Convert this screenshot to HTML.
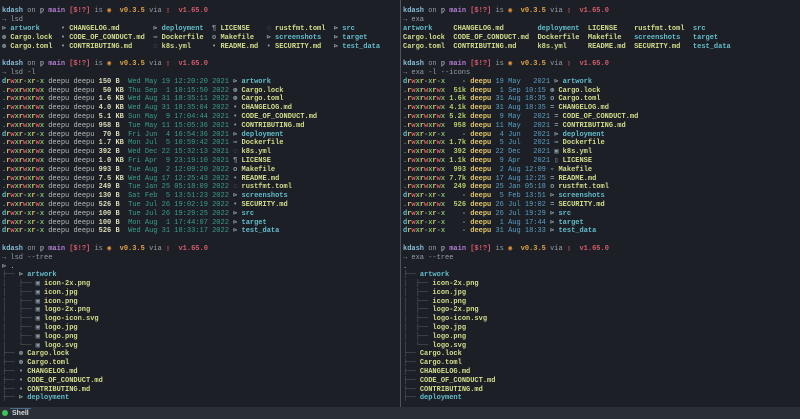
<!DOCTYPE html>
<html><head><meta charset="utf-8"><style>
html,body{margin:0;padding:0;background:#1c2026;width:800px;height:419px;overflow:hidden}
pre{position:absolute;margin:0;font-family:"Liberation Mono","DejaVu Sans Mono",monospace;font-size:7px;line-height:8.8px;font-weight:bold;color:#c8ccd0;white-space:pre}
#L{left:2px;top:7.4px}
#R{left:403px;top:7.4px}
o{display:inline-block;width:1ch;color:#8a9aa0}
w{display:inline-block;width:2ch}
k{color:#86bcd8}
g{color:#969ca4;font-weight:normal}
m{color:#b57ad2}
qq{color:#d9566c}
v{color:#e0a042}
uu{color:#d35a68}
d{color:#62bccb}
f{color:#d3dc8c}
t{color:#3a9e86;font-weight:normal}
e{color:#b8b8b8;font-weight:normal}
sz{color:#dcdcb4}
c{color:#62bccb}
y{color:#d6c26a}
r{color:#e0606c}
x{color:#7cc06c}
n{color:#8a9096}
l{color:#5a6068;font-weight:normal}
z{color:#b0cc66}
h{color:#e2c468}
bb{color:#5b9fc2;font-weight:normal}
#div{position:absolute;left:400px;top:0;width:1px;height:407px;background:#4e545c}
#bar{position:absolute;left:0;top:407px;width:800px;height:12px;background:#2a2f36}
#dot{position:absolute;left:2px;top:410px;width:6px;height:6px;border-radius:50%;background:#3fc25a}
#tab{position:absolute;left:10px;top:408px;font-family:"Liberation Sans",sans-serif;font-size:7px;font-weight:bold;color:#d8dce0;line-height:10px;border-top:1px solid #4a6a90;padding:0 2px}
</style></head><body>
<pre id="L"><k>kdash</k> <g>on</g> <m><o>ƿ</o> main</m> <qq>[$!?]</qq> <g>is</g> <w style="color:#e8913a">◉</w> <v>v0.3.5</v> <g>via</g> <w style="color:#c0505a">▯</w> <uu>v1.65.0</uu>
<g>→ lsd</g>
<o>⊳</o> <d>artwork</d>     <o>•</o> <f>CHANGELOG.md</f>        <o>⊳</o> <d>deployment</d>  <o>¶</o> <f>LICENSE</f>    <o>◌</o> <f>rustfmt.toml</f>  <o>⊳</o> <d>src</d>
<o>⊛</o> <f>Cargo.lock</f>  <o>•</o> <f>CODE_OF_CONDUCT.md</f>  <o>⊸</o> <f>Dockerfile</f>  <o>o</o> <f>Makefile</f>   <o>⊳</o> <d>screenshots</d>   <o>⊳</o> <d>target</d>
<o>⊛</o> <f>Cargo.toml</f>  <o>•</o> <f>CONTRIBUTING.md</f>     <o>◌</o> <f>k8s.yml</f>     <o>•</o> <f>README.md</f>  <o>•</o> <f>SECURITY.md</f>   <o>⊳</o> <d>test_data</d>

<k>kdash</k> <g>on</g> <m><o>ƿ</o> main</m> <qq>[$!?]</qq> <g>is</g> <w style="color:#e8913a">◉</w> <v>v0.3.5</v> <g>via</g> <w style="color:#c0505a">▯</w> <uu>v1.65.0</uu>
<g>→ lsd -l</g>
<c>d</c><y>r</y><r>w</r><x>x</x><y>r</y><n>-</n><x>x</x><y>r</y><n>-</n><x>x</x> <e>deepu deepu</e> <sz>150 B </sz> <t>Wed May 19 12:20:20 2021</t> <o>⊳</o> <d>artwork</d>
<n>.</n><y>r</y><r>w</r><x>x</x><y>r</y><r>w</r><x>x</x><y>r</y><r>w</r><x>x</x> <e>deepu deepu</e> <sz> 50 KB</sz> <t>Thu Sep  1 10:15:50 2022</t> <o>⊛</o> <f>Cargo.lock</f>
<n>.</n><y>r</y><r>w</r><x>x</x><y>r</y><r>w</r><x>x</x><y>r</y><r>w</r><x>x</x> <e>deepu deepu</e> <sz>1.6 KB</sz> <t>Wed Aug 31 18:35:11 2022</t> <o>⊛</o> <f>Cargo.toml</f>
<n>.</n><y>r</y><r>w</r><x>x</x><y>r</y><r>w</r><x>x</x><y>r</y><r>w</r><x>x</x> <e>deepu deepu</e> <sz>4.0 KB</sz> <t>Wed Aug 31 18:35:04 2022</t> <o>•</o> <f>CHANGELOG.md</f>
<n>.</n><y>r</y><r>w</r><x>x</x><y>r</y><r>w</r><x>x</x><y>r</y><r>w</r><x>x</x> <e>deepu deepu</e> <sz>5.1 KB</sz> <t>Sun May  9 17:04:44 2021</t> <o>•</o> <f>CODE_OF_CONDUCT.md</f>
<n>.</n><y>r</y><r>w</r><x>x</x><y>r</y><r>w</r><x>x</x><y>r</y><r>w</r><x>x</x> <e>deepu deepu</e> <sz>958 B </sz> <t>Tue May 11 15:05:36 2021</t> <o>•</o> <f>CONTRIBUTING.md</f>
<c>d</c><y>r</y><r>w</r><x>x</x><y>r</y><n>-</n><x>x</x><y>r</y><n>-</n><x>x</x> <e>deepu deepu</e> <sz> 70 B </sz> <t>Fri Jun  4 16:54:36 2021</t> <o>⊳</o> <d>deployment</d>
<n>.</n><y>r</y><r>w</r><x>x</x><y>r</y><r>w</r><x>x</x><y>r</y><r>w</r><x>x</x> <e>deepu deepu</e> <sz>1.7 KB</sz> <t>Mon Jul  5 10:59:42 2021</t> <o>⊸</o> <f>Dockerfile</f>
<n>.</n><y>r</y><r>w</r><x>x</x><y>r</y><r>w</r><x>x</x><y>r</y><r>w</r><x>x</x> <e>deepu deepu</e> <sz>392 B </sz> <t>Wed Dec 22 15:32:13 2021</t> <o>◌</o> <f>k8s.yml</f>
<n>.</n><y>r</y><r>w</r><x>x</x><y>r</y><r>w</r><x>x</x><y>r</y><r>w</r><x>x</x> <e>deepu deepu</e> <sz>1.0 KB</sz> <t>Fri Apr  9 23:19:10 2021</t> <o>¶</o> <f>LICENSE</f>
<n>.</n><y>r</y><r>w</r><x>x</x><y>r</y><r>w</r><x>x</x><y>r</y><r>w</r><x>x</x> <e>deepu deepu</e> <sz>993 B </sz> <t>Tue Aug  2 12:09:20 2022</t> <o>o</o> <f>Makefile</f>
<n>.</n><y>r</y><r>w</r><x>x</x><y>r</y><r>w</r><x>x</x><y>r</y><r>w</r><x>x</x> <e>deepu deepu</e> <sz>7.5 KB</sz> <t>Wed Aug 17 12:25:43 2022</t> <o>•</o> <f>README.md</f>
<n>.</n><y>r</y><r>w</r><x>x</x><y>r</y><r>w</r><x>x</x><y>r</y><r>w</r><x>x</x> <e>deepu deepu</e> <sz>249 B </sz> <t>Tue Jan 25 05:18:09 2022</t> <o>◌</o> <f>rustfmt.toml</f>
<c>d</c><y>r</y><r>w</r><x>x</x><y>r</y><n>-</n><x>x</x><y>r</y><n>-</n><x>x</x> <e>deepu deepu</e> <sz>130 B </sz> <t>Sat Feb  5 13:51:23 2022</t> <o>⊳</o> <d>screenshots</d>
<n>.</n><y>r</y><r>w</r><x>x</x><y>r</y><r>w</r><x>x</x><y>r</y><r>w</r><x>x</x> <e>deepu deepu</e> <sz>526 B </sz> <t>Tue Jul 26 19:02:19 2022</t> <o>•</o> <f>SECURITY.md</f>
<c>d</c><y>r</y><r>w</r><x>x</x><y>r</y><n>-</n><x>x</x><y>r</y><n>-</n><x>x</x> <e>deepu deepu</e> <sz>100 B </sz> <t>Tue Jul 26 19:29:25 2022</t> <o>⊳</o> <d>src</d>
<c>d</c><y>r</y><r>w</r><x>x</x><y>r</y><n>-</n><x>x</x><y>r</y><n>-</n><x>x</x> <e>deepu deepu</e> <sz>100 B </sz> <t>Mon Aug  1 17:44:07 2022</t> <o>⊳</o> <d>target</d>
<c>d</c><y>r</y><r>w</r><x>x</x><y>r</y><n>-</n><x>x</x><y>r</y><n>-</n><x>x</x> <e>deepu deepu</e> <sz>526 B </sz> <t>Wed Aug 31 18:33:17 2022</t> <o>⊳</o> <d>test_data</d>

<k>kdash</k> <g>on</g> <m><o>ƿ</o> main</m> <qq>[$!?]</qq> <g>is</g> <w style="color:#e8913a">◉</w> <v>v0.3.5</v> <g>via</g> <w style="color:#c0505a">▯</w> <uu>v1.65.0</uu>
<g>→ lsd --tree</g>
<o>⊳</o> <d>.</d>
<l>├──</l> <o>⊳</o> <d>artwork</d>
<l>│   ├──</l> <o>▣</o> <f>icon-2x.png</f>
<l>│   ├──</l> <o>▣</o> <f>icon.jpg</f>
<l>│   ├──</l> <o>▣</o> <f>icon.png</f>
<l>│   ├──</l> <o>▣</o> <f>logo-2x.png</f>
<l>│   ├──</l> <o>▣</o> <f>logo-icon.svg</f>
<l>│   ├──</l> <o>▣</o> <f>logo.jpg</f>
<l>│   ├──</l> <o>▣</o> <f>logo.png</f>
<l>│   └──</l> <o>▣</o> <f>logo.svg</f>
<l>├──</l> <o>⊛</o> <f>Cargo.lock</f>
<l>├──</l> <o>⊛</o> <f>Cargo.toml</f>
<l>├──</l> <o>•</o> <f>CHANGELOG.md</f>
<l>├──</l> <o>•</o> <f>CODE_OF_CONDUCT.md</f>
<l>├──</l> <o>•</o> <f>CONTRIBUTING.md</f>
<l>├──</l> <o>⊳</o> <d>deployment</d></pre>
<pre id="R"><k>kdash</k> <g>on</g> <m><o>ƿ</o> main</m> <qq>[$!?]</qq> <g>is</g> <w style="color:#e8913a">◉</w> <v>v0.3.5</v> <g>via</g> <w style="color:#c0505a">▯</w> <uu>v1.65.0</uu>
<g>→ exa</g>
<d>artwork</d>     <f>CHANGELOG.md</f>        <d>deployment</d>  <f>LICENSE</f>    <f>rustfmt.toml</f>  <d>src</d>
<f>Cargo.lock</f>  <f>CODE_OF_CONDUCT.md</f>  <f>Dockerfile</f>  <f>Makefile</f>   <d>screenshots</d>   <d>target</d>
<f>Cargo.toml</f>  <f>CONTRIBUTING.md</f>     <f>k8s.yml</f>     <f>README.md</f>  <f>SECURITY.md</f>   <d>test_data</d>

<k>kdash</k> <g>on</g> <m><o>ƿ</o> main</m> <qq>[$!?]</qq> <g>is</g> <w style="color:#e8913a">◉</w> <v>v0.3.5</v> <g>via</g> <w style="color:#c0505a">▯</w> <uu>v1.65.0</uu>
<g>→ exa -l --icons</g>
<c>d</c><y>r</y><r>w</r><x>x</x><y>r</y><n>-</n><x>x</x><y>r</y><n>-</n><x>x</x>    <n>-</n> <h>deepu</h> <bb>19 May   2021</bb> <o>⊳</o> <d>artwork</d>
<n>.</n><y>r</y><r>w</r><x>x</x><y>r</y><r>w</r><x>x</x><y>r</y><r>w</r><x>x</x>  <z>51k</z> <h>deepu</h> <bb> 1 Sep 10:15</bb> <o>⊛</o> <f>Cargo.lock</f>
<n>.</n><y>r</y><r>w</r><x>x</x><y>r</y><r>w</r><x>x</x><y>r</y><r>w</r><x>x</x> <z>1.6k</z> <h>deepu</h> <bb>31 Aug 18:35</bb> <o>o</o> <f>Cargo.toml</f>
<n>.</n><y>r</y><r>w</r><x>x</x><y>r</y><r>w</r><x>x</x><y>r</y><r>w</r><x>x</x> <z>4.1k</z> <h>deepu</h> <bb>31 Aug 18:35</bb> <o>=</o> <f>CHANGELOG.md</f>
<n>.</n><y>r</y><r>w</r><x>x</x><y>r</y><r>w</r><x>x</x><y>r</y><r>w</r><x>x</x> <z>5.2k</z> <h>deepu</h> <bb> 9 May   2021</bb> <o>=</o> <f>CODE_OF_CONDUCT.md</f>
<n>.</n><y>r</y><r>w</r><x>x</x><y>r</y><r>w</r><x>x</x><y>r</y><r>w</r><x>x</x>  <z>958</z> <h>deepu</h> <bb>11 May   2021</bb> <o>=</o> <f>CONTRIBUTING.md</f>
<c>d</c><y>r</y><r>w</r><x>x</x><y>r</y><n>-</n><x>x</x><y>r</y><n>-</n><x>x</x>    <n>-</n> <h>deepu</h> <bb> 4 Jun   2021</bb> <o>⊳</o> <d>deployment</d>
<n>.</n><y>r</y><r>w</r><x>x</x><y>r</y><r>w</r><x>x</x><y>r</y><r>w</r><x>x</x> <z>1.7k</z> <h>deepu</h> <bb> 5 Jul   2021</bb> <o>⊸</o> <f>Dockerfile</f>
<n>.</n><y>r</y><r>w</r><x>x</x><y>r</y><r>w</r><x>x</x><y>r</y><r>w</r><x>x</x>  <z>392</z> <h>deepu</h> <bb>22 Dec   2021</bb> <o>▣</o> <f>k8s.yml</f>
<n>.</n><y>r</y><r>w</r><x>x</x><y>r</y><r>w</r><x>x</x><y>r</y><r>w</r><x>x</x> <z>1.1k</z> <h>deepu</h> <bb> 9 Apr   2021</bb> <o>▯</o> <f>LICENSE</f>
<n>.</n><y>r</y><r>w</r><x>x</x><y>r</y><r>w</r><x>x</x><y>r</y><r>w</r><x>x</x>  <z>993</z> <h>deepu</h> <bb> 2 Aug 12:09</bb> <o>▿</o> <f>Makefile</f>
<n>.</n><y>r</y><r>w</r><x>x</x><y>r</y><r>w</r><x>x</x><y>r</y><r>w</r><x>x</x> <z>7.7k</z> <h>deepu</h> <bb>17 Aug 12:25</bb> <o>=</o> <f>README.md</f>
<n>.</n><y>r</y><r>w</r><x>x</x><y>r</y><r>w</r><x>x</x><y>r</y><r>w</r><x>x</x>  <z>249</z> <h>deepu</h> <bb>25 Jan 05:18</bb> <o>o</o> <f>rustfmt.toml</f>
<c>d</c><y>r</y><r>w</r><x>x</x><y>r</y><n>-</n><x>x</x><y>r</y><n>-</n><x>x</x>    <n>-</n> <h>deepu</h> <bb> 5 Feb 13:51</bb> <o>⊳</o> <d>screenshots</d>
<n>.</n><y>r</y><r>w</r><x>x</x><y>r</y><r>w</r><x>x</x><y>r</y><r>w</r><x>x</x>  <z>526</z> <h>deepu</h> <bb>26 Jul 19:02</bb> <o>=</o> <f>SECURITY.md</f>
<c>d</c><y>r</y><r>w</r><x>x</x><y>r</y><n>-</n><x>x</x><y>r</y><n>-</n><x>x</x>    <n>-</n> <h>deepu</h> <bb>26 Jul 19:29</bb> <o>⊳</o> <d>src</d>
<c>d</c><y>r</y><r>w</r><x>x</x><y>r</y><n>-</n><x>x</x><y>r</y><n>-</n><x>x</x>    <n>-</n> <h>deepu</h> <bb> 1 Aug 17:44</bb> <o>⊳</o> <d>target</d>
<c>d</c><y>r</y><r>w</r><x>x</x><y>r</y><n>-</n><x>x</x><y>r</y><n>-</n><x>x</x>    <n>-</n> <h>deepu</h> <bb>31 Aug 18:33</bb> <o>⊳</o> <d>test_data</d>

<k>kdash</k> <g>on</g> <m><o>ƿ</o> main</m> <qq>[$!?]</qq> <g>is</g> <w style="color:#e8913a">◉</w> <v>v0.3.5</v> <g>via</g> <w style="color:#c0505a">▯</w> <uu>v1.65.0</uu>
<g>→ exa --tree</g>
<d>.</d>
<l>├──</l> <d>artwork</d>
<l>│  ├──</l> <f>icon-2x.png</f>
<l>│  ├──</l> <f>icon.jpg</f>
<l>│  ├──</l> <f>icon.png</f>
<l>│  ├──</l> <f>logo-2x.png</f>
<l>│  ├──</l> <f>logo-icon.svg</f>
<l>│  ├──</l> <f>logo.jpg</f>
<l>│  ├──</l> <f>logo.png</f>
<l>│  └──</l> <f>logo.svg</f>
<l>├──</l> <f>Cargo.lock</f>
<l>├──</l> <f>Cargo.toml</f>
<l>├──</l> <f>CHANGELOG.md</f>
<l>├──</l> <f>CODE_OF_CONDUCT.md</f>
<l>├──</l> <f>CONTRIBUTING.md</f>
<l>├──</l> <d>deployment</d></pre>
<div id="div"></div>
<div id="bar"></div>
<div id="dot"></div>
<div id="tab">Shell</div>
</body></html>
